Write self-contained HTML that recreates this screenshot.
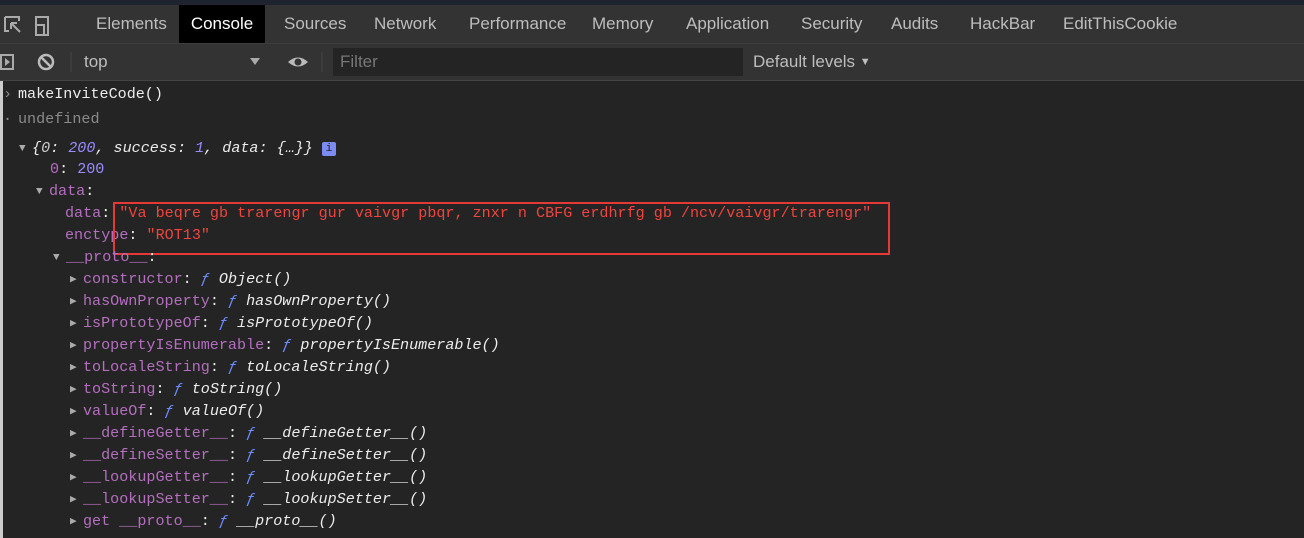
<html><head><style>
body{margin:0;width:1304px;height:538px;background:#242424;overflow:hidden;position:relative;font-family:"Liberation Sans",sans-serif}
.top{position:absolute;left:0;top:0;width:1304px;height:5px;background:#1e2330}
.tabs{position:absolute;left:0;top:5px;width:1304px;height:38px;background:#333;border-bottom:1px solid #3d3d3d}
.tab{position:absolute;top:0;height:38px;line-height:38px;color:#bdbdbd;font-size:17px}
.tb{position:absolute;left:0;top:44px;width:1304px;height:36px;background:#333;border-bottom:1px solid #444}
.l{position:absolute;height:22px;line-height:22px;font-family:"Liberation Mono",monospace;font-size:15.1px;white-space:pre;color:#ececec}
.p{color:#b46fbf}.n{color:#9a8cff}.f{color:#6d8cff;font-style:italic}.i{font-style:italic}.s{color:#f0443d}.g{color:#8a8a8a}
.a{color:#aaa;font-size:11px;display:inline-block;width:13px;vertical-align:1px}
</style></head><body>
<div class="top"></div>
<div style="position:absolute;left:0;top:5px;width:3px;height:533px;background:#ccc"></div>
<div class="tabs">
<svg style="position:absolute;left:2px;top:9px" width="70" height="22"><path d="M3 3h14v4M3 3v14h4" stroke="#aaa" fill="none" stroke-width="2"/><path d="M9 9l9 9M9 9h6M9 9v6" stroke="#aaa" stroke-width="2" fill="none"/><rect x="34" y="3" width="12" height="18" stroke="#aaa" fill="none" stroke-width="2"/><rect x="34" y="11" width="8" height="10" stroke="#aaa" fill="#333" stroke-width="2"/><path d="M71 2v20" stroke="#444"/></svg>
<div class="tab" style="left:96px">Elements</div>
<div class="tab" style="left:179px;width:86px;background:#000;color:#fff;text-align:center">Console</div>
<div class="tab" style="left:284px">Sources</div>
<div class="tab" style="left:374px">Network</div>
<div class="tab" style="left:469px">Performance</div>
<div class="tab" style="left:592px">Memory</div>
<div class="tab" style="left:686px">Application</div>
<div class="tab" style="left:801px">Security</div>
<div class="tab" style="left:891px">Audits</div>
<div class="tab" style="left:970px">HackBar</div>
<div class="tab" style="left:1063px">EditThisCookie</div>
</div>
<div class="tb">
<svg style="position:absolute;left:0;top:8px" width="340" height="22"><rect x="1" y="3" width="12" height="14" fill="none" stroke="#aaa" stroke-width="2"/><path d="M5 6l5 4-5 4z" fill="#aaa"/><circle cx="46" cy="10" r="7" fill="none" stroke="#bbb" stroke-width="2.5"/><path d="M41 5l10 10" stroke="#bbb" stroke-width="2.5"/><path d="M71 0v20M322 0v20" stroke="#444"/><path d="M250 6h10l-5 7z" fill="#aaa"/><path d="M288 10q10-9 20 0q-10 9-20 0z" fill="#bbb"/><circle cx="298" cy="10" r="3.5" fill="#333"/></svg>
<div class="tab" style="left:84px;top:0;height:36px;line-height:36px">top</div>
<div style="position:absolute;left:333px;top:4px;width:403px;height:28px;background:#242424;color:#777;font-size:17px;line-height:28px;padding-left:7px">Filter</div>
<div class="tab" style="left:753px;top:0;height:36px;line-height:36px">Default levels <span style="font-size:11px;vertical-align:2px">▼</span></div>
</div>
<div class="l g" style="left:3px;top:83px">›</div>
<div class="l" style="left:18px;top:83px">makeInviteCode()</div>
<div class="l g" style="left:3px;top:108px">·</div>
<div class="l g" style="left:18px;top:108px">undefined</div>
<div class="l" style="left:19px;top:137px"><span class="a">▼</span><span class="i">{<span style="color:#ccc">0</span>: <span class="n">200</span>, success: <span class="n">1</span>, data: {…}}</span> <span style="display:inline-block;width:14px;height:14px;background:#7b8cf0;color:#222;border-radius:2px;font-size:11px;line-height:14px;text-align:center;vertical-align:1px">i</span></div>
<div class="l" style="left:50px;top:158px"><span class="p">0</span>: <span class="n">200</span></div>
<div class="l" style="left:36px;top:180px"><span class="a">▼</span><span class="p">data</span>:</div>
<div class="l" style="left:65px;top:202px"><span class="p">data</span>: <span class="s">"Va beqre gb trarengr gur vaivgr pbqr, znxr n CBFG erdhrfg gb /ncv/vaivgr/trarengr"</span></div>
<div class="l" style="left:65px;top:224px"><span class="p">enctype</span>: <span class="s">"ROT13"</span></div>
<div style="position:absolute;left:113px;top:202px;width:773px;height:49px;border:2px solid #e53935"></div>
<div class="l" style="left:53px;top:246px"><span class="a">▼</span><span class="p">__proto__</span>:</div>
<div class="l" style="left:70px;top:268px"><span class="a">▶</span><span class="p">constructor</span>: <span class="f">ƒ</span> <span class="i">Object()</span></div>
<div class="l" style="left:70px;top:290px"><span class="a">▶</span><span class="p">hasOwnProperty</span>: <span class="f">ƒ</span> <span class="i">hasOwnProperty()</span></div>
<div class="l" style="left:70px;top:312px"><span class="a">▶</span><span class="p">isPrototypeOf</span>: <span class="f">ƒ</span> <span class="i">isPrototypeOf()</span></div>
<div class="l" style="left:70px;top:334px"><span class="a">▶</span><span class="p">propertyIsEnumerable</span>: <span class="f">ƒ</span> <span class="i">propertyIsEnumerable()</span></div>
<div class="l" style="left:70px;top:356px"><span class="a">▶</span><span class="p">toLocaleString</span>: <span class="f">ƒ</span> <span class="i">toLocaleString()</span></div>
<div class="l" style="left:70px;top:378px"><span class="a">▶</span><span class="p">toString</span>: <span class="f">ƒ</span> <span class="i">toString()</span></div>
<div class="l" style="left:70px;top:400px"><span class="a">▶</span><span class="p">valueOf</span>: <span class="f">ƒ</span> <span class="i">valueOf()</span></div>
<div class="l" style="left:70px;top:422px"><span class="a">▶</span><span class="p">__defineGetter__</span>: <span class="f">ƒ</span> <span class="i">__defineGetter__()</span></div>
<div class="l" style="left:70px;top:444px"><span class="a">▶</span><span class="p">__defineSetter__</span>: <span class="f">ƒ</span> <span class="i">__defineSetter__()</span></div>
<div class="l" style="left:70px;top:466px"><span class="a">▶</span><span class="p">__lookupGetter__</span>: <span class="f">ƒ</span> <span class="i">__lookupGetter__()</span></div>
<div class="l" style="left:70px;top:488px"><span class="a">▶</span><span class="p">__lookupSetter__</span>: <span class="f">ƒ</span> <span class="i">__lookupSetter__()</span></div>
<div class="l" style="left:70px;top:510px"><span class="a">▶</span><span class="p">get __proto__</span>: <span class="f">ƒ</span> <span class="i">__proto__()</span></div>
</body></html>
